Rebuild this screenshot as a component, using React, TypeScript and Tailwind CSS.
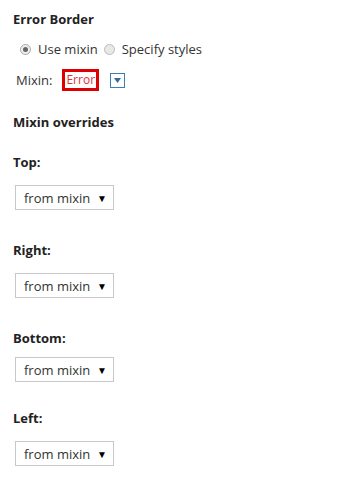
const SIDES = [
  { name: "Top", labelGap: "mt-[22px]", selectGap: "mt-[14px]" },
  { name: "Right", labelGap: "mt-[31px]", selectGap: "mt-[14px]" },
  { name: "Bottom", labelGap: "mt-[31px]", selectGap: "mt-[10px]" },
  { name: "Left", labelGap: "mt-[27px]", selectGap: "mt-[14px]" },
];

function MixinSelect() {
  return (
    <div className="flex h-[25px] w-[99px] items-center justify-between border border-[#c8c8c8] bg-white pl-[8px] pr-[6px] text-[13px] text-[#333]">
      <span>from mixin</span>
      <span className="text-[10px] text-black">▼</span>
    </div>
  );
}

export default function App() {
  return (
    <div
      className="h-[486px] w-[338px] bg-white px-[13px] pt-[10px] text-[13px] leading-[18px] text-[#222]"
      style={{ fontFamily: '"Open Sans", sans-serif' }}
    >
      <div className="font-bold">Error Border</div>

      <div className="mt-[12px] flex items-center pl-[7px] text-[#333]">
        <span className="flex h-[11px] w-[11px] items-center justify-center rounded-full border border-[#aaa] bg-[#eee]">
          <span className="h-[5px] w-[5px] rounded-full bg-[#666]" />
        </span>
        <span className="ml-[7px]">Use mixin</span>
        <span className="ml-[6px] h-[11px] w-[11px] rounded-full border border-[#bbb] bg-[#e8e8e8]" />
        <span className="ml-[7px]">Specify styles</span>
      </div>

      <div className="mt-[11px] flex items-center pl-[3px] text-[#333]">
        <span>Mixin:</span>
        <span className="ml-[10px] flex h-[22px] items-center border-[3px] border-[#d00] px-[1px] text-[12px] text-[#d33]">
          Error
        </span>
        <span className="ml-[11px] flex h-[15px] w-[15px] items-center justify-center border border-[#3a7fb5]">
          <svg width="7" height="5" viewBox="0 0 7 5">
            <path d="M0 0h7L3.5 5z" fill="#2a6ea3" />
          </svg>
        </span>
      </div>

      <div className="mt-[22px] font-bold">Mixin overrides</div>

      {SIDES.map((s) => (
        <div key={s.name}>
          <div className={`${s.labelGap} font-bold`}>{s.name}:</div>
          <div className={`${s.selectGap} pl-[2px]`}>
            <MixinSelect />
          </div>
        </div>
      ))}
    </div>
  );
}
